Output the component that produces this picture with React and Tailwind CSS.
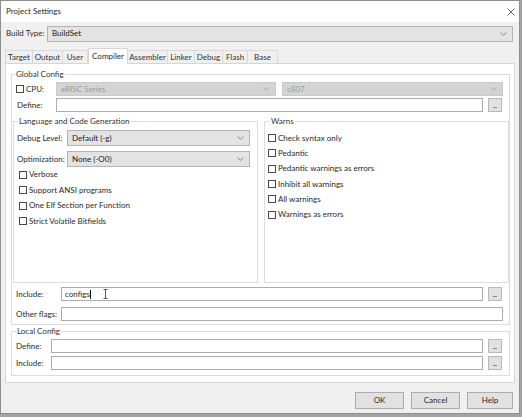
import React from "react";

const Check = () => (
  <span className="w-[8px] h-[8px] shrink-0 border border-[#4a4a4a] bg-white" />
);

const Chevron = ({ color = "#777" }) => (
  <svg width="7" height="4" viewBox="0 0 7 4" className="shrink-0">
    <path d="M0.5 0.5 L3.5 3.3 L6.5 0.5" fill="none" stroke={color} strokeWidth="0.9" />
  </svg>
);

function Combo({ text, className, disabled }) {
  return (
    <div
      className={`flex items-center justify-between pl-[4px] pr-[5px] border ${
        disabled
          ? "bg-[#d4d4d4] border-[#c9c9c9] text-[#9a9a9a]"
          : "bg-[#e3e3e3] border-[#b4b4b4] text-[#222]"
      } ${className}`}
    >
      <span>{text}</span>
      <Chevron color={disabled ? "#a8a8a8" : "#7a7a7a"} />
    </div>
  );
}

const Input = ({ className, children }) => (
  <div className={`flex items-center bg-white border border-[#acacac] ${className}`}>{children}</div>
);

const Dots = () => (
  <div className="w-[14px] h-[14px] shrink-0 flex items-end justify-center pb-[3px] bg-[#e1e1e1] border border-[#b8b8b8]">
    <span className="w-[4px] h-px bg-[#8a8a8a]" />
  </div>
);

const Legend = ({ children, className = "" }) => (
  <div className={`-mt-[6px] h-[11px] leading-[11px] w-fit px-[1px] bg-white text-[#333] ${className}`}>
    {children}
  </div>
);

const CheckRow = ({ label, className = "" }) => (
  <div className={`flex items-center gap-[2px] ${className}`}>
    <Check />
    <span>{label}</span>
  </div>
);

const tabs = [
  ["Target", "w-[28px]"],
  ["Output", "w-[30px]"],
  ["User", "w-[25px]"],
  ["Compiler", "w-[40px]"],
  ["Assembler", "w-[40px]"],
  ["Linker", "w-[27px]"],
  ["Debug", "w-[28px]"],
  ["Flash", "w-[25px]"],
  ["Base", "w-[30px]"],
];

export default function App() {
  return (
    <div className="w-[522px] h-[417px] bg-[#a3a3a3] overflow-hidden whitespace-nowrap font-['Lato','Noto_Sans_CJK_SC',sans-serif] text-[8px] leading-[11px] text-[#2a2a2a]">
      <div className="w-[520px] h-[414px] border border-[#8f8f8f] bg-[#f0f0f0] flex flex-col">
        {/* title bar */}
        <div className="h-[21px] shrink-0 bg-white flex items-center justify-between pl-[5px] pr-[4px]">
          <span>Project Settings</span>
          <svg width="8" height="8" viewBox="0 0 8 8">
            <path d="M0.5 0.5 L7.5 7.5 M7.5 0.5 L0.5 7.5" stroke="#555" strokeWidth="0.9" />
          </svg>
        </div>

        {/* build type */}
        <div className="mt-[4px] h-[15px] flex items-center pl-[5px] pr-[6px]">
          <span className="w-[41px] shrink-0">Build Type:</span>
          <Combo text="BuildSet" className="flex-1 h-[16px]" />
        </div>

        {/* tabs */}
        <div className="mt-[6px] h-[16px] flex items-end pl-[4px]">
          {tabs.map(([t, w]) =>
            t === "Compiler" ? (
              <div
                key={t}
                className={`${w} h-[16px] -mb-px z-10 flex items-start justify-center pt-[2px] bg-white border border-b-0 border-[#d6d6d6]`}
              >
                {t}
              </div>
            ) : (
              <div
                key={t}
                className={`${w} h-[13px] flex items-center justify-center border-t border-r border-[#d9d9d9] first:border-l text-[#333]`}
              >
                {t}
              </div>
            )
          )}
        </div>

        {/* tab page */}
        <div className="ml-[4px] mr-[4px] h-[320px] bg-white border border-[#d6d6d6] flex flex-col">
          {/* Global Config */}
          <div className="mt-[10px] ml-[5px] w-[499px] border border-[#dcdcdc] pb-[3px] flex flex-col">
            <Legend className="ml-[3px]">Global Config</Legend>
            <div className="mt-[2px] h-[14px] flex items-center pl-[4px]">
              <div className="w-[40px] shrink-0 flex items-center gap-[2px]">
                <Check />
                <span>CPU:</span>
              </div>
              <Combo text="eRISC Series" disabled className="w-[220px] h-[14px]" />
              <Combo text="c807" disabled className="ml-[6px] w-[221px] h-[14px]" />
            </div>
            <div className="mt-[2px] h-[14px] flex items-center pl-[4px]">
              <span className="w-[40px] shrink-0 pl-[1px]">Define:</span>
              <Input className="w-[427px] h-[14px]" />
              <div className="ml-[5px]">
                <Dots />
              </div>
            </div>

            <div className="mt-[9px] ml-[1px] flex gap-[6px]">
              {/* Language and Code Generation */}
              <div className="w-[245px] h-[162px] border border-[#dcdcdc] flex flex-col">
                <Legend className="ml-[4px]">Language and Code Generation</Legend>
                <div className="mt-[3px] h-[16px] flex items-center pl-[3px]">
                  <span className="w-[50px] shrink-0">Debug Level:</span>
                  <Combo text="Default (-g)" className="w-[183px] h-[16px]" />
                </div>
                <div className="mt-[5px] h-[16px] flex items-center pl-[3px]">
                  <span className="w-[50px] shrink-0">Optimization:</span>
                  <Combo text="None (-O0)" className="w-[183px] h-[16px]" />
                </div>
                <div className="flex flex-col pl-[5px]">
                  <CheckRow label="Verbose" className="h-[15.5px]" />
                  <CheckRow label="Support ANSI programs" className="h-[15.5px]" />
                  <CheckRow label="One Elf Section per Function" className="h-[15.5px]" />
                  <CheckRow label="Strict Volatile Bitfields" className="h-[15.5px]" />
                </div>
              </div>

              {/* Warns */}
              <div className="w-[245px] h-[162px] border border-[#dcdcdc] flex flex-col">
                <Legend className="ml-[5px]">Warns</Legend>
                <div className="mt-[3.5px] flex flex-col pl-[3px]">
                  <CheckRow label="Check syntax only" className="h-[15.3px]" />
                  <CheckRow label="Pedantic" className="h-[15.3px]" />
                  <CheckRow label="Pedantic warnings as errors" className="h-[15.3px]" />
                  <CheckRow label="Inhibit all warnings" className="h-[15.3px]" />
                  <CheckRow label="All warnings" className="h-[15.3px]" />
                  <CheckRow label="Warnings as errors" className="h-[15.3px]" />
                </div>
              </div>
            </div>

            <div className="mt-[4px] h-[14px] flex items-center pl-[4px]">
              <span className="w-[45px] shrink-0">Include:</span>
              <Input className="w-[422px] h-[14px] border-[#6aa6dc] pl-[3px]">
                <span>configs</span>
                <span className="w-px h-[9px] bg-[#111]" />
                <svg width="5" height="10" viewBox="0 0 5 10" className="ml-[12px]">
                  <path d="M0.5 0.5 H4.5 M2.5 0.5 V9.5 M0.5 9.5 H4.5" stroke="#333" strokeWidth="0.8" fill="none" />
                </svg>
              </Input>
              <div className="ml-[5px]">
                <Dots />
              </div>
            </div>
            <div className="mt-[6px] h-[14px] flex items-center pl-[4px]">
              <span className="w-[45px] shrink-0">Other flags:</span>
              <Input className="w-[442px] h-[14px]" />
            </div>
          </div>

          {/* Local Config */}
          <div className="mt-[6px] ml-[5px] w-[499px] border border-[#dcdcdc] pb-[5px] flex flex-col">
            <Legend className="ml-[4px]">Local Config</Legend>
            <div className="mt-[2px] h-[14px] flex items-center pl-[4px]">
              <span className="w-[35px] shrink-0">Define:</span>
              <Input className="w-[432px] h-[14px]" />
              <div className="ml-[5px]">
                <Dots />
              </div>
            </div>
            <div className="mt-[3px] h-[14px] flex items-center pl-[4px]">
              <span className="w-[35px] shrink-0">Include:</span>
              <Input className="w-[432px] h-[14px]" />
              <div className="ml-[5px]">
                <Dots />
              </div>
            </div>
          </div>
        </div>

        {/* buttons */}
        <div className="mt-[9px] flex justify-end gap-[7px] pr-[6px]">
          <button className="w-[49px] h-[17px] bg-[#e1e1e1] border border-[#adadad]">OK</button>
          <button className="w-[49px] h-[17px] bg-[#e1e1e1] border border-[#adadad]">Cancel</button>
          <button className="w-[46px] h-[17px] bg-[#e1e1e1] border border-[#adadad]">Help</button>
        </div>
      </div>
    </div>
  );
}
